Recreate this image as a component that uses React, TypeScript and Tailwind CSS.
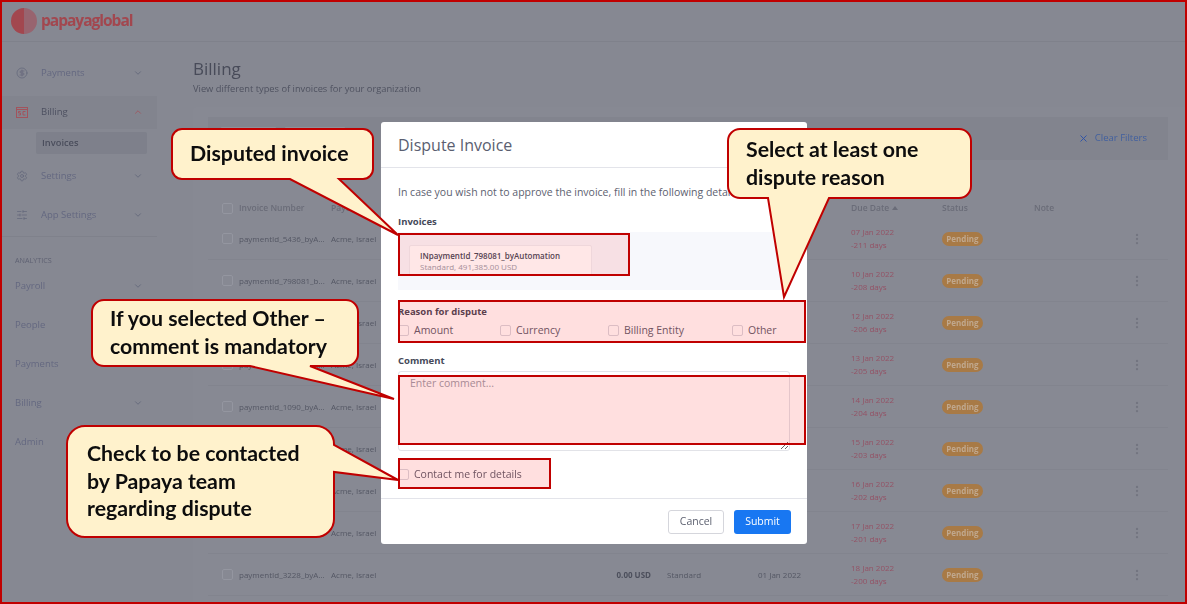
import React from "react";
import { ChevronDown, ChevronUp, CircleDollarSign, Settings, SlidersHorizontal, X, MoreVertical } from "lucide-react";

type Row = { id: string; due: string; days: string; date: string };

const rows: Row[] = [
  { id: "paymentId_5436_byA...", due: "07 Jan 2022", days: "-211 days", date: "01 Jan 2022" },
  { id: "paymentId_798081_b...", due: "10 Jan 2022", days: "-208 days", date: "01 Jan 2022" },
  { id: "paymentId_2210_byA...", due: "12 Jan 2022", days: "-206 days", date: "01 Jan 2022" },
  { id: "paymentId_4471_byA...", due: "13 Jan 2022", days: "-205 days", date: "01 Jan 2022" },
  { id: "paymentId_1090_byA...", due: "14 Jan 2022", days: "-204 days", date: "01 Jan 2022" },
  { id: "paymentId_6652_byA...", due: "15 Jan 2022", days: "-203 days", date: "01 Jan 2022" },
  { id: "paymentId_8123_byA...", due: "16 Jan 2022", days: "-202 days", date: "01 Jan 2022" },
  { id: "paymentId_3307_byA...", due: "17 Jan 2022", days: "-201 days", date: "01 Jan 2022" },
  { id: "paymentId_3228_byA...", due: "18 Jan 2022", days: "-200 days", date: "01 Jan 2022" },
];

const Box = ({ className = "" }: { className?: string }) => (
  <span className={`block w-[11px] h-[11px] shrink-0 rounded-[2px] border ${className}`} />
);

const NavItem = ({ icon, label, chevron = true }: { icon?: React.ReactNode; label: string; chevron?: boolean }) => (
  <div className="flex items-center h-[39px] text-[9.5px] text-[#646880]">
    {icon ? <span className="w-[41px] pl-[16px] flex text-[#62667a]">{icon}</span> : <span className="w-[15px]" />}
    <span className="flex-1">{label}</span>
    {chevron && <ChevronDown size={10} className="mr-[14px] text-[#62667a]" />}
  </div>
);

const Sidebar = () => (
  <aside className="w-[157px] shrink-0 pt-[11.5px]">
    <NavItem label="Payments" icon={<CircleDollarSign size={12} strokeWidth={1.4} />} />
    <div className="flex items-center h-[33px] my-[3px] bg-[#82848e] text-[9.5px] text-[#4d5060]">
      <span className="w-[41px] pl-[16px] flex">
        <svg width="12" height="11" viewBox="0 0 12 11" fill="none" stroke="#a2535c" strokeWidth="1">
          <rect x="0.5" y="0.5" width="11" height="10" />
          <path d="M0.5 2.5h11M4.5 4.5h-2v1.5h2v2h-2M9.5 4.5h-2.5v3.5h2.5" />
        </svg>
      </span>
      <span className="flex-1">Billing</span>
      <ChevronUp size={10} className="mr-[14px] text-[#a2535c]" />
    </div>
    <div className="ml-[36px] mr-[10px] mb-[3px] h-[22px] rounded-[2px] bg-[#7e808b] flex items-center pl-[6px] text-[9.3px] font-semibold text-[#4a4d5c]">
      Invoices
    </div>
    <NavItem label="Settings" icon={<Settings size={12} strokeWidth={1.4} />} />
    <NavItem label="App Settings" icon={<SlidersHorizontal size={12} strokeWidth={1.4} />} />
    <div className="mt-[1px] border-t border-[#7f818b]" />
    <div className="pl-[15px] pt-[18px] text-[7.2px] leading-[10px] text-[#5e6172]">ANALYTICS</div>
    <div className="mt-[2px]">
      <NavItem label="Payroll" />
      <NavItem label="People" chevron={false} />
      <NavItem label="Payments" chevron={false} />
      <NavItem label="Billing" />
      <NavItem label="Admin" chevron={false} />
    </div>
  </aside>
);

const InvoiceRow = ({ row }: { row: Row }) => (
  <div className="flex items-center h-[42px] shrink-0 pl-[14px] border-b border-[#82848e] text-[8px] text-[#545764]">
    <Box className="border-[#9496a0]" />
    <span className="w-[92px] ml-[6px] truncate">{row.id}</span>
    <span className="w-[320px] flex justify-between">
      <span>Acme, Israel</span>
      <span className="font-bold text-[#4c4f5c]">0.00 USD</span>
    </span>
    <span className="w-[91px] ml-[16px]">Standard</span>
    <span className="w-[93px]">{row.date}</span>
    <span className="w-[91px] flex flex-col gap-[1px] leading-[12px] text-[#945265]">
      <span>{row.due}</span>
      <span>{row.days}</span>
    </span>
    <span className="w-[92px]">
      <span className="flex items-center justify-center w-[41px] h-[14px] rounded-full bg-[#a87a46] text-[8px] font-bold text-[#c0a88e]">Pending</span>
    </span>
    <span className="w-[96px]" />
    <MoreVertical size={14} className="text-[#737580]" />
  </div>
);

const Main = () => (
  <main className="flex-1 min-w-0 pl-[36px] overflow-hidden">
    <h1 className="pt-[16px] text-[17px] leading-[22px] text-[#484b59]">Billing</h1>
    <p className="mt-[2px] text-[9.3px] leading-[14px] text-[#4f5260]">View different types of invoices for your organization</p>
    <section className="mt-[11px] pt-[10px] pl-[15px] pr-[19px] h-[500px] bg-[#878993] rounded-tl-[3px]">
      <div className="h-[43px] flex items-center px-[12px] gap-[7px] bg-[#82848e]">
        <span className="w-[57px] h-[24px] rounded-[2px] border border-[#8f919a]" />
        <span className="w-[62px] h-[24px] rounded-[2px] border border-[#8f919a]" />
        <span className="flex-1" />
        <span className="flex items-center gap-[6px] pr-[9px] text-[9.5px] text-[#42609f]">
          <X size={11} strokeWidth={2} className="text-[#2a50a8]" />
          Clear Filters
        </span>
      </div>
      <div className="mt-[38px] flex items-center h-[20px] pl-[14px] text-[8.5px] font-semibold text-[#6a6c78]">
        <Box className="border-[#9496a0]" />
        <span className="w-[92px] ml-[6px]">Invoice Number</span>
        <span className="w-[520px]">Payer</span>
        <span className="w-[91px] flex items-center gap-[3px]">
          Due Date
          <svg width="6" height="4" viewBox="0 0 6 4"><path d="M3 0l3 4H0z" fill="#6a6c78" /></svg>
        </span>
        <span className="w-[92px]">Status</span>
        <span>Note</span>
      </div>
      {rows.map((row) => (
        <InvoiceRow key={row.id} row={row} />
      ))}
    </section>
  </main>
);

const Reason = ({ label, className }: { label: string; className: string }) => (
  <label className={`flex items-center gap-[5px] ${className}`}>
    <Box className="border-[#d7d9e0] bg-white" />
    {label}
  </label>
);

const DisputeModal = () => (
  <div className="absolute left-[381px] top-[122px] w-[426px] h-[422px] rounded-[3px] bg-white flex flex-col text-[#5d6170] blur-[0.3px]">
    <h2 className="h-[46px] shrink-0 flex items-center pl-[17px] border-b border-[#e3e4ea] text-[16px] text-[#5a5e70]">Dispute Invoice</h2>
    <div className="flex-1 px-[17px]">
      <p className="mt-[17px] text-[10.5px] leading-[14px]">In case you wish not to approve the invoice, fill in the following details</p>
      <div className="mt-[16px] text-[9.5px] leading-[13px] font-bold text-[#454959]">Invoices</div>
      <div className="mt-[4px] h-[58px] bg-[#f7f8fc] pl-[11px] pt-[13px]">
        <div className="w-[183px] h-[31px] rounded-[2px] border border-[#eeeef2] bg-white pl-[10px] pt-[4px]">
          <div className="text-[8px] leading-[11px] font-semibold text-[#464a5a]">INpaymentId_798081_byAutomation</div>
          <div className="text-[8px] leading-[11px] text-[#9b9eab]">Standard, 491,385.00 USD</div>
        </div>
      </div>
      <div className="mt-[15px] text-[9.5px] leading-[13px] font-bold text-[#454959]">Reason for dispute</div>
      <div className="mt-[5px] flex items-center text-[10.5px] leading-[14px]">
        <Reason label="Amount" className="w-[102px]" />
        <Reason label="Currency" className="w-[108px]" />
        <Reason label="Billing Entity" className="w-[124px]" />
        <Reason label="Other" className="" />
      </div>
      <div className="mt-[17px] text-[9.5px] leading-[13px] font-bold text-[#454959]">Comment</div>
      <textarea
        placeholder="Enter comment..."
        className="block mt-[4px] w-full h-[80px] rounded-[3px] border border-[#e2e3e8] px-[11px] py-[4px] text-[10.5px] leading-[14px] placeholder:text-[#9b9eab] outline-none"
      />
      <label className="mt-[16px] flex items-center gap-[5px] text-[10.5px] leading-[14px]">
        <Box className="border-[#d7d9e0] bg-white" />
        Contact me for details
      </label>
    </div>
    <div className="h-[46px] shrink-0 border-t border-[#e3e4ea] flex items-center justify-end gap-[10px] pr-[16px]">
      <button className="w-[56px] h-[24px] rounded-[3px] border border-[#d5d6dc] text-[10.5px] text-[#5d6170]">Cancel</button>
      <button className="w-[57px] h-[24px] rounded-[3px] bg-[#1877f2] text-[10.5px] text-white">Submit</button>
    </div>
  </div>
);

// callout balloons share one drawing layer, text sits on top of it
const balloon = "M182 129H363a10 10 0 0 1 10 10V169a10 10 0 0 1 -10 10H339L398 235L290 179H182a10 10 0 0 1 -10 -10V139a10 10 0 0 1 10 -10Z";
const balloon2 = "M740 129H959a12 12 0 0 1 12 12V186a12 12 0 0 1 -12 12H829L784 297L768 198H740a12 12 0 0 1 -12 -12V141a12 12 0 0 1 12 -12Z";
const balloon3 = "M104 300H346a12 12 0 0 1 12 12V354a12 12 0 0 1 -12 12H310L394 399L250 366H104a12 12 0 0 1 -12 -12V312a12 12 0 0 1 12 -12Z";
const balloon4 = "M85 426H316a18 18 0 0 1 18 18V445L398 480L334 472V519a18 18 0 0 1 -18 18H85a18 18 0 0 1 -18 -18V444a18 18 0 0 1 18 -18Z";

const Callout = ({ className, lines }: { className: string; lines: string[] }) => (
  <div className={`absolute whitespace-pre text-[21.3px] font-bold text-[#0d0d0d] font-['Lato',sans-serif] ${className}`}>
    {lines.map((line) => (
      <div key={line}>{line}</div>
    ))}
  </div>
);

const Annotations = () => (
  <>
    <div className="absolute left-[398px] top-[233px] w-[232px] h-[43px] border-2 border-[#c00000] bg-[#ff000018]" />
    <div className="absolute left-[398px] top-[300px] w-[408px] h-[43px] border-2 border-[#c00000] bg-[#ff000020]" />
    <div className="absolute left-[398px] top-[375px] w-[408px] h-[70px] border-2 border-[#c00000] bg-[#ff000020]" />
    <div className="absolute left-[398px] top-[458px] w-[153px] h-[31px] border-2 border-[#c00000] bg-[#ff000020]" />
    <svg className="absolute inset-0" width="1187" height="604" fill="#fff2cc" stroke="#c00000" strokeWidth="2">
      <path d={balloon} />
      <path d={balloon2} />
      <path d={balloon3} />
      <path d={balloon4} />
    </svg>
    <Callout className="left-[190px] top-[139px] leading-[28px]" lines={["Disputed invoice"]} />
    <Callout className="left-[746px] top-[135px] leading-[28px]" lines={["Select at least one", "dispute reason"]} />
    <Callout className="left-[110px] top-[304px] leading-[28px]" lines={["If you selected Other –", "comment is mandatory"]} />
    <Callout className="left-[87px] top-[440px] leading-[27.5px]" lines={["Check to be contacted", "by Papaya team", "regarding dispute"]} />
  </>
);

export default function App() {
  return (
    <div className="relative w-[1187px] h-[604px] overflow-hidden bg-[#868892] font-['Open_Sans',sans-serif]">
      <div className="blur-[0.3px]">
        <header className="h-[42px] flex items-center gap-[4px] pl-[11px] border-b border-[#7f818b]">
          <svg width="26" height="26" viewBox="0 0 26 26">
            <path d="M13 0a13 13 0 0 0 0 26Z" fill="#a2474f" />
            <path d="M13 0a13 13 0 0 1 0 26Z" fill="#98646f" />
          </svg>
          <span className="text-[15.5px] font-bold tracking-[-1px] text-[#a2474f]">papayaglobal</span>
        </header>
        <div className="flex h-[562px]">
          <Sidebar />
          <Main />
        </div>
      </div>
      <DisputeModal />
      <Annotations />
      <div className="absolute inset-0 border-2 border-[#c00000] pointer-events-none" />
    </div>
  );
}
